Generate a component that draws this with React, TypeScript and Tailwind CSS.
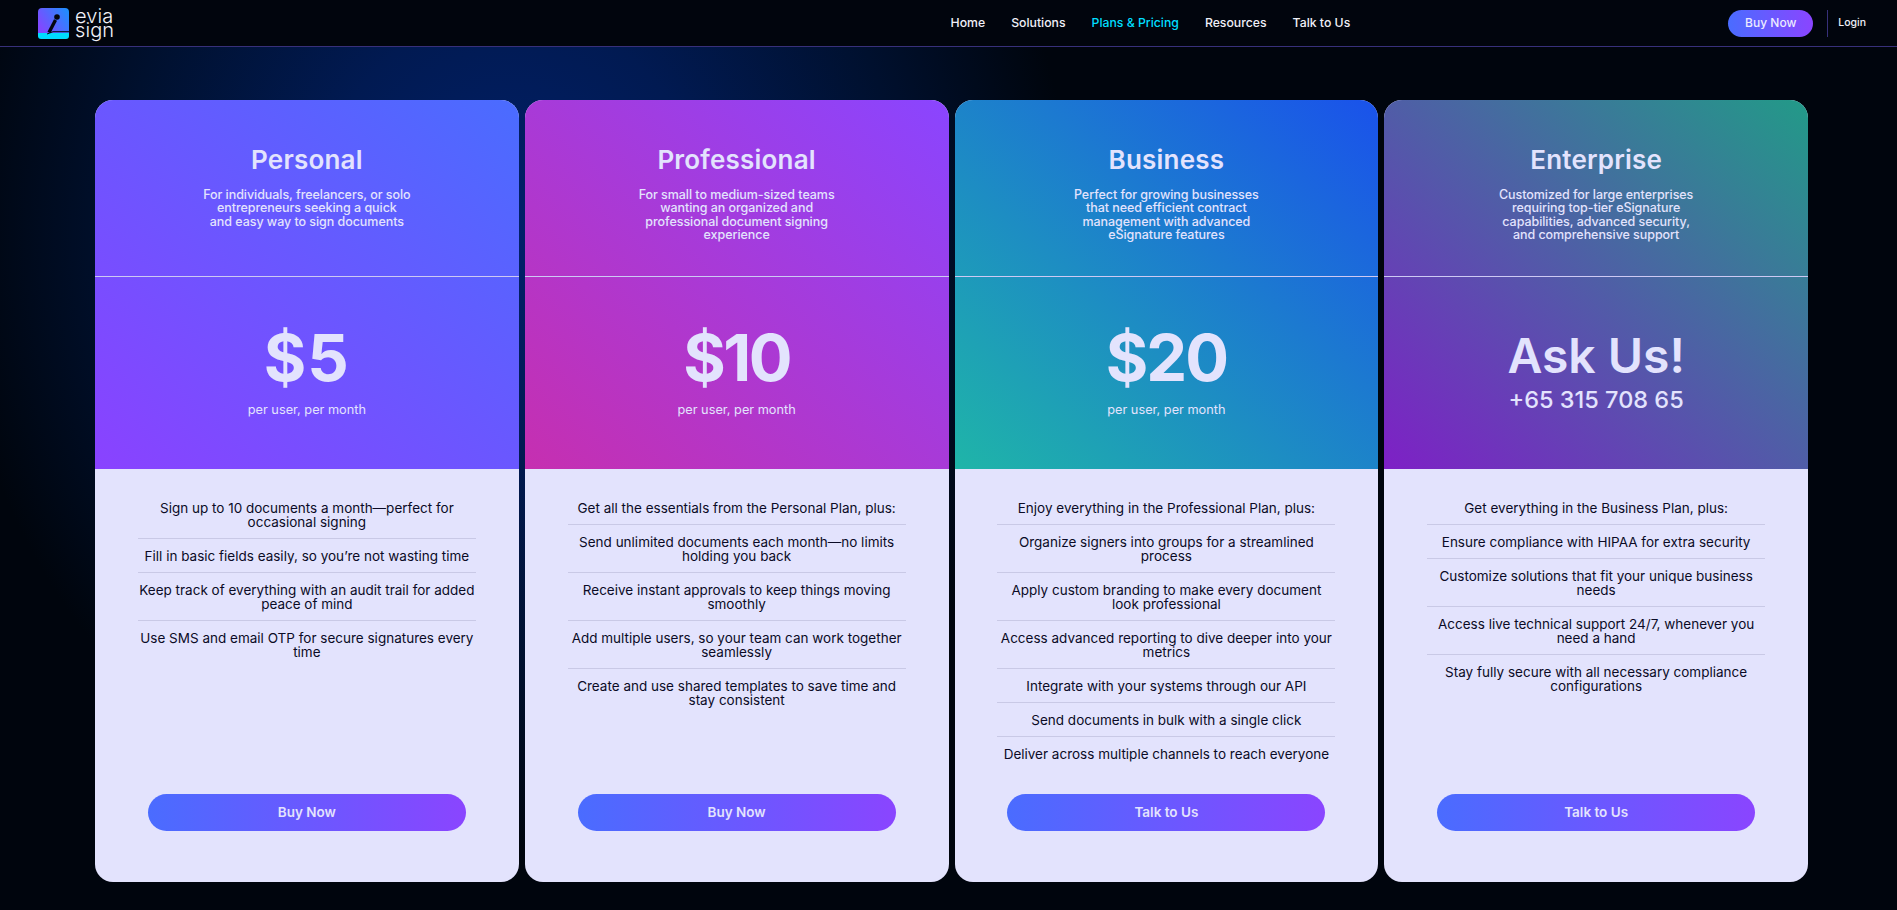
import React from "react";

type Plan = {
  name: string;
  desc: string;
  price: string;
  priceCls?: string;
  phone?: string;
  grad: string;
  features: string[];
  cta: string;
};

const plans: Plan[] = [
  {
    name: "Personal",
    desc: "For individuals, freelancers, or solo\nentrepreneurs seeking a quick\nand easy way to sign documents",
    price: "$5",
    priceCls: "tracking-[1px]",
    grad: "bg-[linear-gradient(41deg,#8a42ff_0%,#4a6cff_100%)]",
    features: [
      "Sign up to 10 documents a month—perfect for\noccasional signing",
      "Fill in basic fields easily, so you’re not wasting time",
      "Keep track of everything with an audit trail for added\npeace of mind",
      "Use SMS and email OTP for secure signatures every\ntime",
    ],
    cta: "Buy Now",
  },
  {
    name: "Professional",
    desc: "For small to medium-sized teams\nwanting an organized and\nprofessional document signing\nexperience",
    price: "$10",
    priceCls: "tracking-[-2.5px]",
    grad: "bg-[linear-gradient(41deg,#c62fb0_0%,#8a45ff_100%)]",
    features: [
      "Get all the essentials from the Personal Plan, plus:",
      "Send unlimited documents each month—no limits\nholding you back",
      "Receive instant approvals to keep things moving\nsmoothly",
      "Add multiple users, so your team can work together\nseamlessly",
      "Create and use shared templates to save time and\nstay consistent",
    ],
    cta: "Buy Now",
  },
  {
    name: "Business",
    desc: "Perfect for growing businesses\nthat need efficient contract\nmanagement with advanced\neSignature features",
    price: "$20",
    priceCls: "tracking-[-2px]",
    grad: "bg-[linear-gradient(41deg,#1fb5a8_0%,#1a52eb_100%)]",
    features: [
      "Enjoy everything in the Professional Plan, plus:",
      "Organize signers into groups for a streamlined\nprocess",
      "Apply custom branding to make every document\nlook professional",
      "Access advanced reporting to dive deeper into your\nmetrics",
      "Integrate with your systems through our API",
      "Send documents in bulk with a single click",
      "Deliver across multiple channels to reach everyone",
    ],
    cta: "Talk to Us",
  },
  {
    name: "Enterprise",
    desc: "Customized for large enterprises\nrequiring top-tier eSignature\ncapabilities, advanced security,\nand comprehensive support",
    price: "Ask Us!",
    phone: "+65 315 708 65",
    grad: "bg-[linear-gradient(41deg,#7e20c6_0%,#229a88_100%)]",
    features: [
      "Get everything in the Business Plan, plus:",
      "Ensure compliance with HIPAA for extra security",
      "Customize solutions that fit your unique business\nneeds",
      "Access live technical support 24/7, whenever you\nneed a hand",
      "Stay fully secure with all necessary compliance\nconfigurations",
    ],
    cta: "Talk to Us",
  },
];

function Logo() {
  return (
    <svg width="31" height="31" viewBox="0 0 31 31" className="shrink-0">
      <defs>
        <linearGradient id="lg" x1="0" y1="0.6" x2="1" y2="0.1">
          <stop offset="0" stopColor="#8049ff" />
          <stop offset="1" stopColor="#1c8fff" />
        </linearGradient>
      </defs>
      <path d="M4 0H27A4 4 0 0 1 31 4V25H0V4A4 4 0 0 1 4 0Z" fill="url(#lg)" />
      <path d="M0 25H31V28A3 3 0 0 1 28 31H3A3 3 0 0 1 0 28Z" fill="#00dcff" />
      <path d="M11 24.5L17.5 12" stroke="#03060f" strokeWidth="3.4" />
      <circle cx="19" cy="9" r="2.8" fill="#03060f" />
      <path d="M9 26L15 23.7H31" stroke="#03060f" strokeWidth="1" fill="none" />
    </svg>
  );
}

function Card({ plan }: { plan: Plan }) {
  return (
    <div className="flex h-[782px] flex-col overflow-hidden rounded-[18px] bg-[#e3e3fd]">
      <div className={`flex h-[369px] flex-col text-[#e3e3fd] ${plan.grad}`}>
        <div className="flex h-[177px] flex-col items-center border-b border-[#cdc9f3] pt-[42px]">
          <h2 className="text-[26px] leading-[36px] font-semibold tracking-[0.2px]">{plan.name}</h2>
          <p className="mt-[9.5px] whitespace-pre text-center text-[12.5px] leading-[13.5px] font-medium tracking-[-0.05px]">
            {plan.desc}
          </p>
        </div>
        {plan.phone ? (
          <div className="flex flex-1 flex-col items-center pt-[49px]">
            <div className="text-[48px] leading-[60px] font-semibold">{plan.price}</div>
            <div className="mt-[-1px] text-[23.5px] leading-[30px] font-medium">{plan.phone}</div>
          </div>
        ) : (
          <div className="flex flex-1 flex-col items-center pt-[43px]">
            <div className={`text-[65px] leading-[76px] font-bold ${plan.priceCls}`}>{plan.price}</div>
            <div className="mt-[5px] text-[12.75px] leading-[18px]">per user, per month</div>
          </div>
        )}
      </div>
      <div className="flex flex-1 flex-col items-center pt-[22px] pb-[51px]">
        <ul className="w-[338px]">
          {plan.features.map((f) => (
            <li
              key={f}
              className="border-b border-[#c9c9e6] py-[9.5px] text-center text-[13.5px] leading-[14px] whitespace-pre text-[#0b0b26] last:border-b-0"
            >
              {f}
            </li>
          ))}
        </ul>
        <button className="mt-auto h-[37px] w-[318px] rounded-full bg-[linear-gradient(90deg,#4a6cff,#8a45ff)] text-[13.5px] font-semibold text-[#e3e3fd]">
          {plan.cta}
        </button>
      </div>
    </div>
  );
}

export default function App() {
  return (
    <div className="flex h-[910px] flex-col overflow-hidden bg-[#00050d] bg-[radial-gradient(ellipse_560px_620px_at_510px_230px,#01206a_0%,#011a52_35%,#00102e_70%,#00050d_100%)] font-['Inter','Noto_Sans',sans-serif]">
      <header className="flex h-[47px] shrink-0 items-center border-b border-[#37307a] bg-[#01050d] pr-[31px] pl-[38px]">
        <div className="flex items-center gap-[6px]">
          <Logo />
          <div className="text-[20px] leading-[14.5px] font-light tracking-[0.1px] text-[#f2f2f8]">
            <div>evia</div>
            <div>sign</div>
          </div>
        </div>
        <nav className="mr-[378px] ml-auto flex items-center gap-[26px] text-[12.25px] font-medium text-[#f0f0f8]">
          <span>Home</span>
          <span>Solutions</span>
          <span className="text-[#00dfff]">Plans &amp; Pricing</span>
          <span>Resources</span>
          <span>Talk to Us</span>
        </nav>
        <div className="flex items-center">
          <button className="h-[27px] w-[85px] rounded-full bg-[linear-gradient(90deg,#4a6cff,#8a45ff)] text-[12px] font-medium text-[#ecebff]">
            Buy Now
          </button>
          <div className="mr-[10px] ml-[14px] h-[27px] w-px bg-[#37307a]" />
          <span className="text-[10.5px] font-medium text-[#f0f0f8]">Login</span>
        </div>
      </header>
      <main className="grid grid-cols-4 gap-[6px] pt-[53px] pr-[89px] pl-[95px]">
        {plans.map((p) => (
          <Card key={p.name} plan={p} />
        ))}
      </main>
    </div>
  );
}
